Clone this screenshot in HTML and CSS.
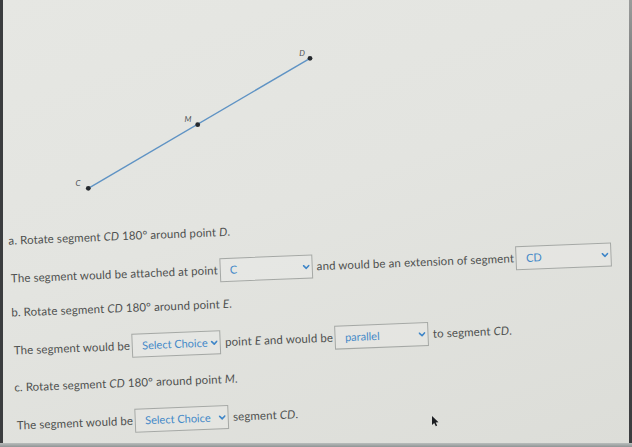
FILE: index.html
```html
<!DOCTYPE html>
<html lang="en">
<head>
<meta charset="utf-8">
<title>Rotate segment CD</title>
<link rel="stylesheet" href="styles.css">
</head>
<body>
<div class="screen">
  <div class="figure">
    <svg class="diagram" width="632" height="230" viewBox="0 0 632 230">
      <line x1="88.3" y1="188.3" x2="310" y2="58.3" class="seg"/>
      <circle cx="310" cy="58.3" r="2.4" class="pt"/>
      <circle cx="197.7" cy="124.7" r="2.4" class="pt"/>
      <circle cx="88.3" cy="188.3" r="2.4" class="pt"/>
      <text x="302" y="56" class="lbl">D</text>
      <text x="188" y="122" class="lbl">M</text>
      <text x="78" y="186" class="lbl">C</text>
    </svg>
  </div>

  <div class="questions">
    <p class="head">a. Rotate segment <i>CD</i> 180° around point <i>D</i>.</p>
    <div class="row">
      <span class="txt">The segment would be attached at point</span>
      <div class="select w93"><span class="val">C</span><svg class="chev" width="7" height="5" viewBox="0 0 7 5"><path d="M0.8 0.8 L3.5 3.6 L6.2 0.8"/></svg></div>
      <span class="txt">and would be an extension of segment</span>
      <div class="select w96"><span class="val">CD</span><svg class="chev" width="7" height="5" viewBox="0 0 7 5"><path d="M0.8 0.8 L3.5 3.6 L6.2 0.8"/></svg></div>
    </div>

    <p class="head">b. Rotate segment <i>CD</i> 180° around point <i>E</i>.</p>
    <div class="row">
      <span class="txt">The segment would be</span>
      <div class="select w89"><span class="val">Select Choice</span><svg class="chev" width="7" height="5" viewBox="0 0 7 5"><path d="M0.8 0.8 L3.5 3.6 L6.2 0.8"/></svg></div>
      <span class="txt">point <i>E</i> and would be</span>
      <div class="select w94"><span class="val">parallel</span><svg class="chev" width="7" height="5" viewBox="0 0 7 5"><path d="M0.8 0.8 L3.5 3.6 L6.2 0.8"/></svg></div>
      <span class="txt">to segment <i>CD</i>.</span>
    </div>

    <p class="head head-c">c. Rotate segment <i>CD</i> 180° around point <i>M</i>.</p>
    <div class="row">
      <span class="txt">The segment would be</span>
      <div class="select w94"><span class="val">Select Choice</span><svg class="chev" width="7" height="5" viewBox="0 0 7 5"><path d="M0.8 0.8 L3.5 3.6 L6.2 0.8"/></svg></div>
      <span class="txt">segment <i>CD</i>.</span>
    </div>
  </div>

  <svg class="cursor" width="8" height="12" viewBox="0 0 8 12"><path d="M1 1 L1 10 L3.2 8 L4.8 11.3 L6.2 10.6 L4.7 7.4 L7.5 7.2 Z"/></svg>
  <div class="edge-left"></div>
  <div class="edge-right"></div>
  <div class="edge-bottom"></div>
</div>
</body>
</html>
```

FILE: styles.css
```css
html, body {
  margin: 0;
  padding: 0;
}
body {
  width: 632px;
  height: 447px;
  overflow: hidden;
  font-family: "Lato", "Open Sans", "Liberation Sans", sans-serif;
}
.screen {
  position: relative;
  width: 632px;
  height: 447px;
  overflow: hidden;
  background: linear-gradient(160deg, #e6e7e3 0%, #e3e4e0 45%, #dcddd8 100%);
}
.figure {
  height: 230px;
}
.diagram {
  display: block;
}
.seg {
  stroke: #5f93c4;
  stroke-width: 1.4;
}
.pt {
  fill: #262a2e;
}
.lbl {
  font-family: "Lato", "Open Sans", sans-serif;
  font-size: 8px;
  font-style: italic;
  fill: #4f5356;
  text-anchor: middle;
}
.questions {
  transform: rotate(-2.3deg);
  transform-origin: 0 0;
  padding: 4px 0 0 8px;
  display: flex;
  flex-direction: column;
  color: #4e504f;
  font-size: 11.5px;
  letter-spacing: 0.1px;
}
.head {
  margin: 0 0 19px 0;
  height: 14px;
  line-height: 14px;
  white-space: nowrap;
}
.head-c {
  margin-top: 3px;
}
.row {
  display: flex;
  align-items: center;
  height: 24px;
  margin-bottom: 15px;
  padding-left: 1px;
  white-space: nowrap;
}
.txt {
  line-height: 14px;
}
i {
  font-style: italic;
}
.select {
  box-sizing: border-box;
  height: 24px;
  border: 1px solid #a5a8a5;
  background: rgba(255, 255, 255, 0.16);
  display: flex;
  align-items: center;
  justify-content: space-between;
  padding: 0 2px 0 9px;
  margin: 0 4px 0 2px;
  color: #4489c8;
  font-size: 11px;
  letter-spacing: 0;
}
.w89 { width: 89px; }
.w93 { width: 93px; }
.w94 { width: 94px; }
.w96 { width: 96px; }
.val {
  line-height: 14px;
}
.chev path {
  fill: none;
  stroke: #3f86c8;
  stroke-width: 1.6;
  stroke-linecap: round;
  stroke-linejoin: round;
}
.cursor {
  position: absolute;
  left: 431px;
  top: 415px;
}
.cursor path {
  fill: #1c1e22;
}
.edge-left {
  position: absolute;
  left: 0;
  top: 0;
  width: 3px;
  height: 447px;
  background: #3b3d3f;
}
.edge-right {
  position: absolute;
  right: 0;
  top: 0;
  width: 3px;
  height: 447px;
  background: linear-gradient(180deg, #9a9c9b 0%, #4a4c4e 40%, #3a3c3e 100%);
}
.edge-bottom {
  position: absolute;
  left: 0;
  bottom: 0;
  width: 632px;
  height: 4px;
  background: linear-gradient(180deg, #b9bdbc, #8f9595);
}
```
